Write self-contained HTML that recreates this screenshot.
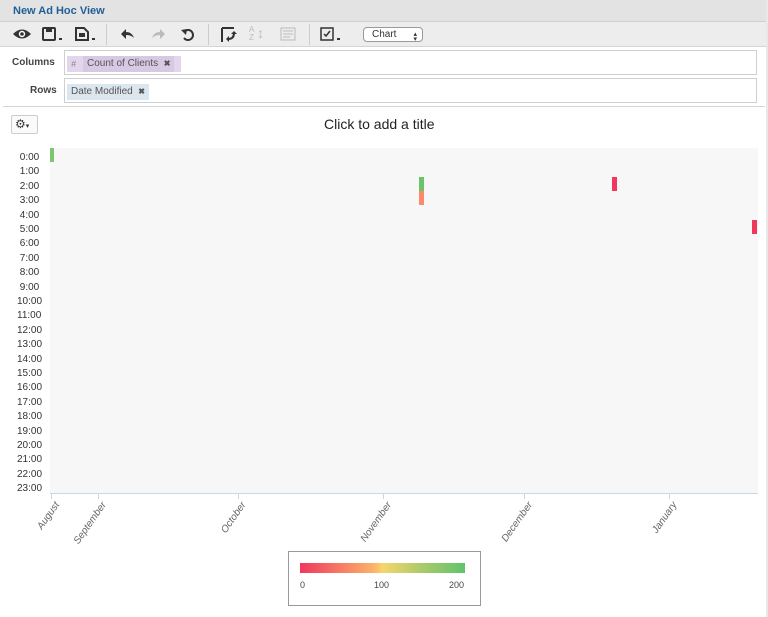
<!DOCTYPE html>
<html><head><style>
*{margin:0;padding:0;box-sizing:border-box}
body{width:768px;height:617px;background:#fff;font-family:"Liberation Sans",sans-serif;position:relative;overflow:hidden;font-size:11px;color:#333}
.a{position:absolute}
.hdr{left:0;top:0;width:768px;height:22px;background:#e3e3e3;border-bottom:1px solid #d0d0d0}
.hdr span{position:absolute;left:13px;top:5px;font-weight:bold;color:#1f5f96;font-size:11px}
.tb{left:0;top:22px;width:768px;height:25px;background:#ededed;border-bottom:1px solid #d4d4d4}
.sep{position:absolute;top:2px;width:1px;height:21px;background:#ccc}
.lbl{font-weight:bold;font-size:10px;color:#444}
.box{background:#fff;border:1px solid #cfcfcf}
.pill{position:absolute;top:5px;height:16px;font-size:10px;line-height:16px;color:#555}
.hl{position:absolute;left:17px;font-size:10px;color:#333}
.mon{position:absolute;font-size:10px;color:#666;font-style:italic;transform-origin:right top;transform:rotate(-55deg);white-space:nowrap}
.tick{position:absolute;top:493px;width:1px;height:6px;background:#c8d6e6}
</style></head><body>
<div class="a hdr"><span>New Ad Hoc View</span></div>
<div class="a tb">
<svg class="a" style="left:12px;top:5px" width="20" height="14"><path d="M1 7Q10 -2 19 7Q10 16 1 7Z" fill="#333"/><circle cx="10" cy="7" r="3.2" fill="#fff"/><circle cx="10" cy="7" r="1.8" fill="#333"/></svg>
<svg class="a" style="left:42px;top:5px" width="24" height="16"><rect x="1" y="1" width="12" height="12" rx="1" fill="none" stroke="#333" stroke-width="2"/><rect x="4" y="1" width="6" height="4" fill="#333"/><rect x="17" y="11" width="3" height="2" fill="#333"/></svg>
<svg class="a" style="left:75px;top:5px" width="24" height="16"><path d="M1 1h8l4 4v8H1z" fill="none" stroke="#333" stroke-width="2"/><rect x="4" y="6" width="6" height="4" fill="#333"/><rect x="17" y="11" width="3" height="2" fill="#333"/></svg>
<div class="sep" style="left:106px"></div>
<svg class="a" style="left:120px;top:6px" width="16" height="12"><path d="M14 10Q12 4 6 4V1L1 6l5 5V7q5 0 8 3z" fill="#333"/></svg>
<svg class="a" style="left:150px;top:6px" width="16" height="12"><path d="M2 10Q4 4 10 4V1l5 5-5 5V7q-5 0-8 3z" fill="#bbb"/></svg>
<svg class="a" style="left:180px;top:5px" width="16" height="14"><path d="M5 4A5 5 0 1 1 4 11" fill="none" stroke="#333" stroke-width="2"/><path d="M1 3l6-1-1 6z" fill="#333"/></svg>
<div class="sep" style="left:208px"></div>
<svg class="a" style="left:220px;top:5px" width="18" height="16"><path d="M2 1v14M2 1h12" stroke="#333" stroke-width="2" fill="none"/><path d="M8 12q6 0 6-6" stroke="#333" stroke-width="2" fill="none"/><path d="M11 7l3-3 3 3zM9 9l-3 3 3 3z" fill="#333"/></svg>
<span class="a" style="left:249px;top:4px;font-size:8px;color:#bbb;line-height:8px">A<br>Z</span><span class="a" style="left:257px;top:3px;color:#bbb;font-size:14px">↕</span>
<svg class="a" style="left:280px;top:5px" width="16" height="14"><rect x="1" y="1" width="14" height="12" fill="none" stroke="#bbb"/><path d="M3 4h10M3 7h10M3 10h7" stroke="#bbb"/></svg>
<div class="sep" style="left:309px"></div>
<svg class="a" style="left:320px;top:5px" width="24" height="16"><rect x="1" y="1" width="12" height="12" fill="none" stroke="#333" stroke-width="1.5"/><path d="M4 7l2 2 4-5" stroke="#333" stroke-width="1.5" fill="none"/><rect x="17" y="11" width="3" height="2" fill="#333"/></svg>
<div class="a" style="left:363px;top:5px;width:60px;height:15px;border:1px solid #999;border-radius:4px;background:#fff;font-size:10px;padding-left:8px;line-height:13px">Chart<span style="position:absolute;right:5px;font-size:7px;top:0">▴<br></span><span style="position:absolute;right:5px;font-size:7px;top:5px">▾</span></div>
</div>
<div class="a lbl" style="left:12px;top:57px">Columns</div>
<div class="a box" style="left:64px;top:50px;width:693px;height:25px"><div class="pill" style="left:2px;width:114px;background:#e3d6ec;padding-left:4px"><i style="font-size:9px;color:#888">#</i><span style="background:#d8c8e4;position:absolute;left:16px;top:0;height:16px;padding:0 4px">Count of Clients &nbsp;<b style="font-size:8px">✖</b></span></div></div>
<div class="a lbl" style="left:30px;top:85px">Rows</div>
<div class="a box" style="left:64px;top:78px;width:693px;height:25px"><div class="pill" style="left:2px;padding:0 4px;background:#dce6ef">Date Modified &nbsp;<b style="font-size:8px">✖</b></div></div>
<div class="a" style="left:3px;top:106px;width:762px;height:1px;background:#d5d5d5"></div>
<div class="a" style="left:766px;top:0;width:2px;height:617px;background:#e8e8e8"></div>
<div class="a" style="left:11px;top:115px;width:27px;height:19px;border:1px solid #ccc;border-radius:2px;background:#fafafa;font-size:12px;padding-left:3px;line-height:16px">⚙<span style="font-size:7px">▾</span></div>
<div class="a" style="left:324px;top:116px;font-size:14px;color:#222">Click to add a title</div>
<div class="a" style="left:50px;top:148px;width:708px;height:345px;background:#f7f7f7"></div>
<div class="a" style="left:50px;top:148px;width:4px;height:14px;background:#7cc66c"></div>
<div class="a" style="left:419px;top:177px;width:5px;height:14px;background:#6dc36c"></div>
<div class="a" style="left:419px;top:191px;width:5px;height:14px;background:#fb8a6a"></div>
<div class="a" style="left:612px;top:177px;width:5px;height:14px;background:#f0385e"></div>
<div class="a" style="left:752px;top:220px;width:5px;height:14px;background:#f0385e"></div>
<div class="a" style="left:50px;top:493px;width:708px;height:1px;background:#c8d6e6"></div>
<div style="position:absolute;left:0;top:1px;width:50px;height:500px">
<div class="hl" style="top:151px">&nbsp;0:00</div><div class="hl" style="top:165px">&nbsp;1:00</div><div class="hl" style="top:180px">&nbsp;2:00</div><div class="hl" style="top:194px">&nbsp;3:00</div><div class="hl" style="top:209px">&nbsp;4:00</div><div class="hl" style="top:223px">&nbsp;5:00</div><div class="hl" style="top:237px">&nbsp;6:00</div><div class="hl" style="top:252px">&nbsp;7:00</div><div class="hl" style="top:266px">&nbsp;8:00</div><div class="hl" style="top:281px">&nbsp;9:00</div><div class="hl" style="top:295px">10:00</div><div class="hl" style="top:309px">11:00</div><div class="hl" style="top:324px">12:00</div><div class="hl" style="top:338px">13:00</div><div class="hl" style="top:353px">14:00</div><div class="hl" style="top:367px">15:00</div><div class="hl" style="top:381px">16:00</div><div class="hl" style="top:396px">17:00</div><div class="hl" style="top:410px">18:00</div><div class="hl" style="top:425px">19:00</div><div class="hl" style="top:439px">20:00</div><div class="hl" style="top:453px">21:00</div><div class="hl" style="top:468px">22:00</div><div class="hl" style="top:482px">23:00</div>
</div>
<div class="tick" style="left:51px"></div><div class="tick" style="left:98px"></div><div class="tick" style="left:238px"></div><div class="tick" style="left:383px"></div><div class="tick" style="left:524px"></div><div class="tick" style="left:669px"></div>
<div class="mon" style="right:715px;top:500px">August</div>
<div class="mon" style="right:668px;top:500px">September</div>
<div class="mon" style="right:528px;top:500px">October</div>
<div class="mon" style="right:383px;top:500px">November</div>
<div class="mon" style="right:242px;top:500px">December</div>
<div class="mon" style="right:97px;top:500px">January</div>
<div class="a" style="left:288px;top:551px;width:193px;height:55px;border:1px solid #999;background:#fff">
<div class="a" style="left:11px;top:11px;width:165px;height:10px;background:linear-gradient(to right,#f0385e,#fbb36a 45%,#f7d56c 50%,#a8ca6a 75%,#5fc46c)"></div>
<div class="a" style="left:11px;top:28px;font-size:9px;color:#444">0</div>
<div class="a" style="left:85px;top:28px;font-size:9px;color:#444">100</div>
<div class="a" style="left:160px;top:28px;font-size:9px;color:#444">200</div>
</div>
</body></html>
